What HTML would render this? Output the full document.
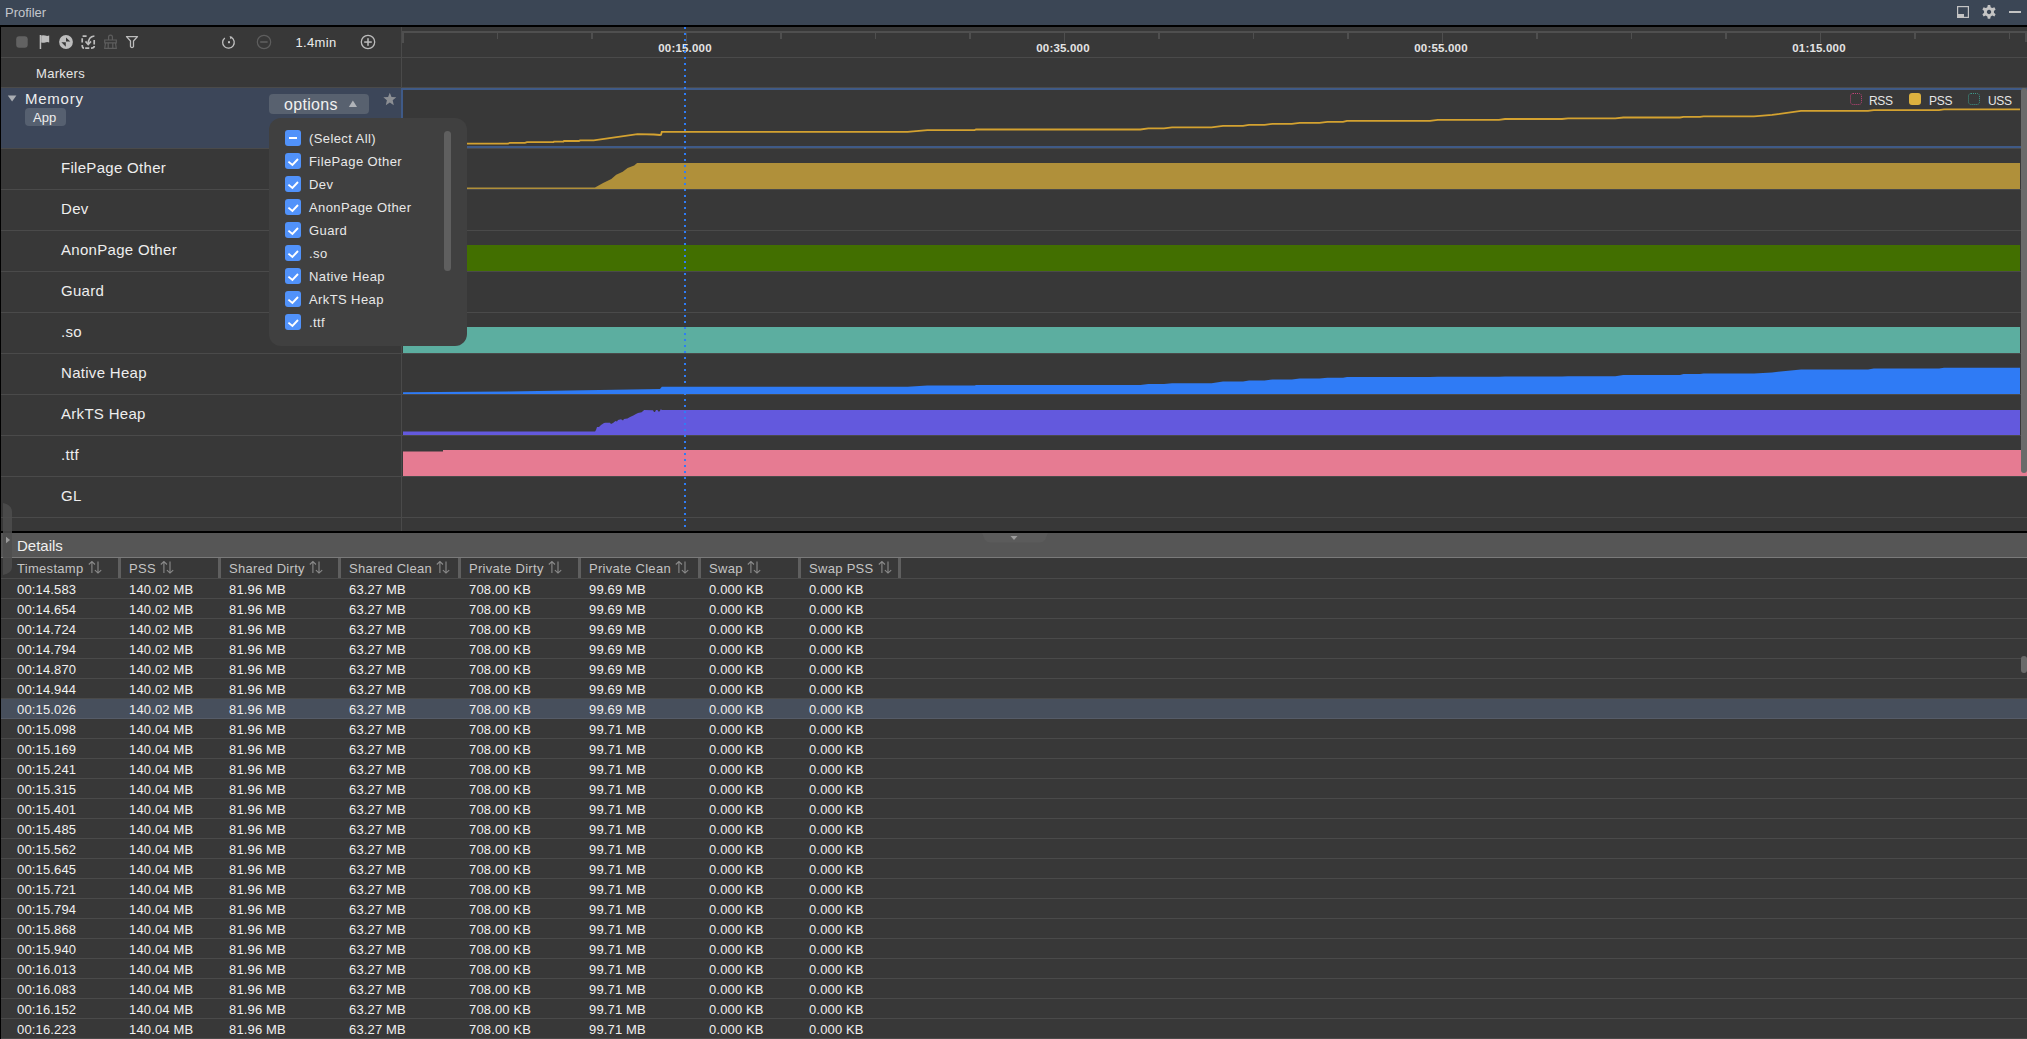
<!DOCTYPE html><html><head><meta charset="utf-8"><style>
*{box-sizing:border-box;margin:0;padding:0}
html,body{width:2027px;height:1039px;overflow:hidden;background:#383838;font-family:"Liberation Sans", sans-serif;}
.a{position:absolute}
.t{position:absolute;white-space:nowrap;line-height:1}
</style></head><body><div class="a" style="left:0px;top:0px;width:2027px;height:25px;background:#3b4655;"></div>
<div class="t" style="left:5px;top:6px;font-size:13px;color:#c3c7cc;">Profiler</div>
<svg class="a" style="left:1950px;top:0px" width="77" height="25" viewBox="1950 0 77 25">
<rect x="1957.6" y="6.6" width="10.8" height="10.8" fill="none" stroke="#c4c4c4" stroke-width="1.2"/>
<rect x="1957.5" y="14" width="6.5" height="3.5" fill="#c4c4c4"/>
<g transform="translate(1989,12)" fill="#c4c4c4">
<path d="M-1.2,-7 h2.4 l0.5,2.2 a5,5 0 0 1 1.6,0.9 l2.1,-0.8 l1.2,2.1 l-1.7,1.5 a5,5 0 0 1 0,1.9 l1.7,1.5 l-1.2,2.1 l-2.1,-0.8 a5,5 0 0 1 -1.6,0.9 l-0.5,2.2 h-2.4 l-0.5,-2.2 a5,5 0 0 1 -1.6,-0.9 l-2.1,0.8 l-1.2,-2.1 l1.7,-1.5 a5,5 0 0 1 0,-1.9 l-1.7,-1.5 l1.2,-2.1 l2.1,0.8 a5,5 0 0 1 1.6,-0.9 z M0,-2.2 a2.2,2.2 0 1 0 0.01,0 z" fill-rule="evenodd"/>
</g>
<rect x="2009" y="11" width="12" height="2" fill="#c4c4c4"/>
</svg>
<div class="a" style="left:0px;top:25px;width:2027px;height:2px;background:#000;"></div>
<div class="a" style="left:0px;top:25px;width:1px;height:1014px;background:#000;"></div>
<div class="a" style="left:1px;top:27px;width:2026px;height:504px;background:#383838;"></div>
<div class="a" style="left:1px;top:57px;width:2026px;height:1px;background:#4a4a4a;"></div>
<div class="a" style="left:1px;top:87px;width:2026px;height:1px;background:#4a4a4a;"></div>
<div class="a" style="left:1px;top:88px;width:400px;height:60px;background:#3c4659;"></div>
<div class="a" style="left:1px;top:148px;width:2026px;height:1px;background:#4a4a4a;"></div>
<div class="a" style="left:1px;top:189px;width:2026px;height:1px;background:#4a4a4a;"></div>
<div class="a" style="left:1px;top:230px;width:2026px;height:1px;background:#4a4a4a;"></div>
<div class="a" style="left:1px;top:271px;width:2026px;height:1px;background:#4a4a4a;"></div>
<div class="a" style="left:1px;top:312px;width:2026px;height:1px;background:#4a4a4a;"></div>
<div class="a" style="left:1px;top:353px;width:2026px;height:1px;background:#4a4a4a;"></div>
<div class="a" style="left:1px;top:394px;width:2026px;height:1px;background:#4a4a4a;"></div>
<div class="a" style="left:1px;top:435px;width:2026px;height:1px;background:#4a4a4a;"></div>
<div class="a" style="left:1px;top:476px;width:2026px;height:1px;background:#4a4a4a;"></div>
<div class="a" style="left:1px;top:517px;width:2026px;height:1px;background:#4a4a4a;"></div>
<div class="a" style="left:401px;top:27px;width:1px;height:504px;background:#4a4a4a;"></div>
<svg class="a" style="left:0;top:27px" width="400" height="30" viewBox="0 27 400 30">
<rect x="16.2" y="36.2" width="11.5" height="11.5" rx="3" fill="#626262"/>
<rect x="39.7" y="35" width="1.5" height="14" fill="#bdbdbd"/>
<path d="M41.2,35.6 q2,-0.8 4,0 t4,0 v6.8 q-2,-0.8 -4,0 t-4,0 z" fill="#bdbdbd"/>
<circle cx="66" cy="42" r="6.9" fill="#bdbdbd"/>
<path d="M66,37.4 L70.3,41.6 L66,41.6 Z M61.4,42.2 L65.8,42.2 L65.8,46.8 Z" fill="#383838"/>
<path d="M82.6,36.1 H86.6 M82.2,38.2 V42.6 M82.2,45 Q82.2,48.1 84,48.2 M85.2,48.2 H89.3 M91,48.2 Q94.2,48.2 94.3,46 M94.2,40 V44.5" fill="none" stroke="#bdbdbd" stroke-width="1.7"/>
<path d="M94.4,36 Q88.2,36.6 88.2,44.2" fill="none" stroke="#bdbdbd" stroke-width="1.6"/>
<path d="M85.5,41.4 L88.2,44.5 L91,41.4" fill="none" stroke="#bdbdbd" stroke-width="1.6"/>
<path d="M108.6,40 v-3 a1.9,1.9 0 0 1 3.8,0 v3 M104.7,40 h11.6 v2.8 h-11.6 z M105.5,43 L104.7,48.3 h11.6 L115.5,43 M108.2,43.2 v4.8 M112.8,43.2 v4.8" fill="none" stroke="#5e5e5e" stroke-width="1.2"/>
<path d="M126.5,36.6 h11 l-4,4.4 v5.6 a1.6,1.6 0 0 1 -3,0 v-5.6 z" fill="none" stroke="#bdbdbd" stroke-width="1.3" stroke-linejoin="round"/>
<path d="M224.8,37.9 A5.8,5.8 0 1 0 231.2,37.3" fill="none" stroke="#c0c0c0" stroke-width="1.3"/>
<path d="M229.6,36.0 L232.6,37.0 L230.5,39.2 Z" fill="#c0c0c0"/>
<rect x="228" y="41.2" width="2" height="2" fill="#c0c0c0"/>
<circle cx="264" cy="42" r="6.7" fill="none" stroke="#5e5e5e" stroke-width="1.2"/>
<rect x="260.2" y="41.2" width="7.4" height="1.6" fill="#5e5e5e"/>
<circle cx="368" cy="42" r="6.7" fill="none" stroke="#bcbcbc" stroke-width="1.3"/>
<rect x="364.2" y="41.3" width="7.6" height="1.5" fill="#bcbcbc"/>
<rect x="367.25" y="38.2" width="1.5" height="7.6" fill="#bcbcbc"/>
</svg>
<div class="t" style="left:295.5px;top:36px;font-size:13px;color:#ececec;letter-spacing:0.35px;">1.4min</div>
<div class="t" style="left:36px;top:67px;font-size:13px;color:#e6e6e6;letter-spacing:0.3px;">Markers</div>
<svg class="a" style="left:0;top:88px" width="20" height="20" viewBox="0 88 20 20"><path d="M7.8,95.4 L16.4,95.4 L12.1,101.6 Z" fill="#a9adb3"/></svg>
<div class="t" style="left:25px;top:91px;font-size:15px;color:#eeeeee;letter-spacing:0.75px;">Memory</div>
<div class="a" style="left:25px;top:108px;width:41px;height:18px;background:#566070;border-radius:4px;"></div>
<div class="t" style="left:33px;top:111px;font-size:13px;color:#eeeeee;">App</div>
<div class="a" style="left:269px;top:94px;width:100px;height:20px;background:#58616f;border-radius:4px;"></div>
<div class="t" style="left:284px;top:97px;font-size:16px;color:#f0f0f0;letter-spacing:0.3px;">options</div>
<svg class="a" style="left:340px;top:94px" width="30" height="20" viewBox="340 94 30 20"><path d="M348.8,106.9 L357,106.9 L352.9,100.6 Z" fill="#b0b3b8"/></svg>
<svg class="a" style="left:380px;top:90px" width="20" height="18" viewBox="380 90 20 18"><path d="M389.8,92.8 L391.5,96.9 L396.3,97.3 L392.7,100.3 L393.8,105.2 L389.8,102.6 L385.8,105.2 L386.9,100.3 L383.3,97.3 L388.1,96.9 Z" fill="#8c8f94"/></svg>
<div class="t" style="left:61px;top:160px;font-size:15px;color:#eeeeee;letter-spacing:0.3px;">FilePage Other</div>
<div class="t" style="left:61px;top:201px;font-size:15px;color:#eeeeee;letter-spacing:0.3px;">Dev</div>
<div class="t" style="left:61px;top:242px;font-size:15px;color:#eeeeee;letter-spacing:0.3px;">AnonPage Other</div>
<div class="t" style="left:61px;top:283px;font-size:15px;color:#eeeeee;letter-spacing:0.3px;">Guard</div>
<div class="t" style="left:61px;top:324px;font-size:15px;color:#eeeeee;letter-spacing:0.3px;">.so</div>
<div class="t" style="left:61px;top:365px;font-size:15px;color:#eeeeee;letter-spacing:0.3px;">Native Heap</div>
<div class="t" style="left:61px;top:406px;font-size:15px;color:#eeeeee;letter-spacing:0.3px;">ArkTS Heap</div>
<div class="t" style="left:61px;top:447px;font-size:15px;color:#eeeeee;letter-spacing:0.3px;">.ttf</div>
<div class="t" style="left:61px;top:488px;font-size:15px;color:#eeeeee;letter-spacing:0.3px;">GL</div>
<div class="a" style="left:402px;top:31px;width:1625px;height:2px;background:#4f4f4f;"></div>
<div class="a" style="left:402.0px;top:32px;width:1.5px;height:11px;background:#4f4f4f"></div>
<div class="a" style="left:496.5px;top:32px;width:1.5px;height:7px;background:#4f4f4f"></div>
<div class="a" style="left:591.0px;top:32px;width:1.5px;height:7px;background:#4f4f4f"></div>
<div class="a" style="left:685.5px;top:32px;width:1.5px;height:11px;background:#4f4f4f"></div>
<div class="a" style="left:780.0px;top:32px;width:1.5px;height:7px;background:#4f4f4f"></div>
<div class="a" style="left:874.5px;top:32px;width:1.5px;height:7px;background:#4f4f4f"></div>
<div class="a" style="left:969.0px;top:32px;width:1.5px;height:7px;background:#4f4f4f"></div>
<div class="a" style="left:1063.5px;top:32px;width:1.5px;height:11px;background:#4f4f4f"></div>
<div class="a" style="left:1158.0px;top:32px;width:1.5px;height:7px;background:#4f4f4f"></div>
<div class="a" style="left:1252.5px;top:32px;width:1.5px;height:7px;background:#4f4f4f"></div>
<div class="a" style="left:1347.0px;top:32px;width:1.5px;height:7px;background:#4f4f4f"></div>
<div class="a" style="left:1441.5px;top:32px;width:1.5px;height:11px;background:#4f4f4f"></div>
<div class="a" style="left:1536.0px;top:32px;width:1.5px;height:7px;background:#4f4f4f"></div>
<div class="a" style="left:1630.5px;top:32px;width:1.5px;height:7px;background:#4f4f4f"></div>
<div class="a" style="left:1725.0px;top:32px;width:1.5px;height:7px;background:#4f4f4f"></div>
<div class="a" style="left:1819.5px;top:32px;width:1.5px;height:11px;background:#4f4f4f"></div>
<div class="a" style="left:1914.0px;top:32px;width:1.5px;height:7px;background:#4f4f4f"></div>
<div class="a" style="left:2008.5px;top:32px;width:1.5px;height:7px;background:#4f4f4f"></div>
<div class="a" style="left:2025px;top:31px;width:2px;height:11px;background:#4f4f4f;"></div>
<div class="t" style="left:645.0px;width:80px;text-align:center;top:43px;font-size:11.5px;font-weight:bold;color:#e4e4e4;letter-spacing:0.2px">00:15.000</div>
<div class="t" style="left:1023.0px;width:80px;text-align:center;top:43px;font-size:11.5px;font-weight:bold;color:#e4e4e4;letter-spacing:0.2px">00:35.000</div>
<div class="t" style="left:1401.0px;width:80px;text-align:center;top:43px;font-size:11.5px;font-weight:bold;color:#e4e4e4;letter-spacing:0.2px">00:55.000</div>
<div class="t" style="left:1779.0px;width:80px;text-align:center;top:43px;font-size:11.5px;font-weight:bold;color:#e4e4e4;letter-spacing:0.2px">01:15.000</div>
<div class="a" style="left:401px;top:88px;width:1626px;height:2px;background:#3f5a87;"></div>
<div class="a" style="left:401px;top:88px;width:2px;height:60px;background:#3f5a87;"></div>
<div class="a" style="left:403px;top:146px;width:1624px;height:2px;background:#3f5a87;"></div>
<svg class="a" style="left:1840px;top:88px" width="180" height="24" viewBox="1840 88 180 24">
<rect x="1850.5" y="93.5" width="11" height="11" rx="2.5" fill="none" stroke="#c4437a" stroke-width="1" stroke-dasharray="1 1"/>
<rect x="1909" y="93" width="12" height="12" rx="3" fill="#dcb13f"/>
<rect x="1968.5" y="93.5" width="11" height="11" rx="2.5" fill="none" stroke="#3e9c8c" stroke-width="1" stroke-dasharray="1 1"/>
</svg>
<div class="t" style="left:1869px;top:95px;font-size:12px;color:#e6e6e6;letter-spacing:-0.3px;">RSS</div>
<div class="t" style="left:1929px;top:95px;font-size:12px;color:#e6e6e6;letter-spacing:-0.3px;">PSS</div>
<div class="t" style="left:1988px;top:95px;font-size:12px;color:#e6e6e6;letter-spacing:-0.3px;">USS</div>
<svg class="a" style="left:0;top:0" width="2027" height="1039" viewBox="0 0 2027 1039"><polyline points="403.0,143.7 508.0,143.7 509.7,142.8 525.0,142.8 527.0,142.2 553.5,142.2 554.0,141.6 563.5,141.6 564.0,141.0 579.0,141.0 580.0,140.4 593.7,140.4 637.5,134.2 654.0,134.5 660.0,135.0 661.0,134.8 661.8,131.9 907.6,131.9 927.4,130.1 974.7,130.1 976.0,129.5 1140.4,129.5 1148.3,128.3 1164.0,128.3 1172.0,127.4 1211.5,127.4 1223.0,125.8 1243.0,125.8 1249.0,124.8 1264.6,124.8 1272.5,123.9 1291.8,123.9 1299.7,122.8 1319.5,122.8 1327.4,121.8 1343.0,121.8 1347.0,120.8 1430.0,120.8 1437.8,119.8 1499.0,119.8 1505.0,119.0 1562.0,119.0 1568.0,118.4 1615.3,118.4 1623.3,117.5 1680.0,117.5 1683.5,116.8 1700.0,116.8 1703.5,116.3 1754.0,116.3 1772.0,114.9 1801.0,110.9 1868.0,110.9 1873.8,110.1 1939.0,110.1 1944.0,109.4 2020.0,109.4" fill="none" stroke="#d4a230" stroke-width="1.8"/><polygon points="403.0,187.6 595.0,187.6 603.1,182.9 611.3,178.9 616.2,174.7 622.7,171.7 627.6,168.1 634.2,165.5 637.1,162.9 2020.0,162.9 2020.0,189.0 403.0,189.0" fill="#b0903a"/><rect x="403" y="245" width="1617" height="26" fill="#426f00"/><rect x="403" y="327" width="1617" height="26" fill="#5caea0"/><polygon points="403.0,392.2 508.0,391.4 660.0,388.9 661.8,386.8 907.6,386.8 927.4,385.4 974.7,385.4 976.0,385.0 1140.4,385.0 1148.3,384.0 1164.0,384.0 1172.0,383.2 1211.5,383.2 1223.0,381.5 1243.0,381.5 1249.0,380.5 1264.6,380.5 1272.5,379.5 1291.8,379.5 1299.7,378.4 1319.5,378.4 1327.4,377.8 1343.0,377.8 1347.0,377.1 1430.0,377.1 1437.8,376.8 1499.0,376.8 1505.0,376.5 1562.0,376.5 1568.0,376.3 1615.3,376.3 1623.3,375.0 1680.0,375.0 1683.5,374.1 1700.0,374.1 1703.5,373.5 1754.0,373.5 1772.0,372.4 1801.0,369.4 1868.0,369.4 1873.8,368.5 1939.0,368.5 1944.0,367.8 2020.0,367.8 2020.0,394.0 403.0,394.0" fill="#2f7bf5"/><polygon points="403.0,431.4 595.0,431.4 596.0,429.9 597.0,427.0 599.0,427.0 601.0,425.0 604.0,423.0 605.5,422.8 610.0,422.8 611.0,424.0 613.0,423.0 615.5,421.0 617.0,421.5 618.0,420.0 621.0,419.3 623.0,420.5 624.0,419.0 627.4,418.4 630.0,417.0 633.3,415.4 636.0,414.0 638.0,413.0 641.6,412.2 644.2,410.1 653.0,410.2 654.0,412.0 655.0,412.0 656.0,410.0 657.5,410.0 658.3,411.5 659.5,411.5 660.8,409.2 662.0,410.1 2020.0,410.1 2020.0,435.0 403.0,435.0" fill="#6359dd"/><polygon points="403.0,451.5 443.0,451.5 443.0,450.0 2027.0,450.0 2027.0,476.0 403.0,476.0" fill="#e67b92"/></svg>
<div class="a" style="left:2021px;top:88px;width:6px;height:385px;background:#6a6a6a;border-radius:3px;"></div>
<div class="a" style="left:684px;top:27px;width:2px;height:501px;background:repeating-linear-gradient(to bottom,transparent 0,transparent 0px,#2f7df5 0px,#2f7df5 2px,transparent 2px,transparent 6px);background-position:0 0px"></div>
<div class="a" style="left:269px;top:118px;width:198px;height:228px;background:#404040;border-radius:12px;"></div>
<div class="a" style="left:444px;top:131px;width:7px;height:140px;background:#5f5f5f;border-radius:3.5px;"></div>
<div class="a" style="left:285px;top:130px;width:16px;height:16px;background:#5192fa;border-radius:3px;"></div>
<div class="a" style="left:289px;top:137px;width:8px;height:2px;background:#ffffff;"></div>
<div class="t" style="left:309px;top:132px;font-size:13px;color:#e8e8e8;letter-spacing:0.4px;">(Select All)</div>
<div class="a" style="left:285px;top:153px;width:16px;height:16px;background:#5192fa;border-radius:3px;"></div>
<svg class="a" style="left:285px;top:153px" width="16" height="16" viewBox="0 0 16 16"><path d="M3.4,8.6 L7.4,12 L13,6" fill="none" stroke="#fff" stroke-width="1.9"/></svg>
<div class="t" style="left:309px;top:155px;font-size:13px;color:#e8e8e8;letter-spacing:0.4px;">FilePage Other</div>
<div class="a" style="left:285px;top:176px;width:16px;height:16px;background:#5192fa;border-radius:3px;"></div>
<svg class="a" style="left:285px;top:176px" width="16" height="16" viewBox="0 0 16 16"><path d="M3.4,8.6 L7.4,12 L13,6" fill="none" stroke="#fff" stroke-width="1.9"/></svg>
<div class="t" style="left:309px;top:178px;font-size:13px;color:#e8e8e8;letter-spacing:0.4px;">Dev</div>
<div class="a" style="left:285px;top:199px;width:16px;height:16px;background:#5192fa;border-radius:3px;"></div>
<svg class="a" style="left:285px;top:199px" width="16" height="16" viewBox="0 0 16 16"><path d="M3.4,8.6 L7.4,12 L13,6" fill="none" stroke="#fff" stroke-width="1.9"/></svg>
<div class="t" style="left:309px;top:201px;font-size:13px;color:#e8e8e8;letter-spacing:0.4px;">AnonPage Other</div>
<div class="a" style="left:285px;top:222px;width:16px;height:16px;background:#5192fa;border-radius:3px;"></div>
<svg class="a" style="left:285px;top:222px" width="16" height="16" viewBox="0 0 16 16"><path d="M3.4,8.6 L7.4,12 L13,6" fill="none" stroke="#fff" stroke-width="1.9"/></svg>
<div class="t" style="left:309px;top:224px;font-size:13px;color:#e8e8e8;letter-spacing:0.4px;">Guard</div>
<div class="a" style="left:285px;top:245px;width:16px;height:16px;background:#5192fa;border-radius:3px;"></div>
<svg class="a" style="left:285px;top:245px" width="16" height="16" viewBox="0 0 16 16"><path d="M3.4,8.6 L7.4,12 L13,6" fill="none" stroke="#fff" stroke-width="1.9"/></svg>
<div class="t" style="left:309px;top:247px;font-size:13px;color:#e8e8e8;letter-spacing:0.4px;">.so</div>
<div class="a" style="left:285px;top:268px;width:16px;height:16px;background:#5192fa;border-radius:3px;"></div>
<svg class="a" style="left:285px;top:268px" width="16" height="16" viewBox="0 0 16 16"><path d="M3.4,8.6 L7.4,12 L13,6" fill="none" stroke="#fff" stroke-width="1.9"/></svg>
<div class="t" style="left:309px;top:270px;font-size:13px;color:#e8e8e8;letter-spacing:0.4px;">Native Heap</div>
<div class="a" style="left:285px;top:291px;width:16px;height:16px;background:#5192fa;border-radius:3px;"></div>
<svg class="a" style="left:285px;top:291px" width="16" height="16" viewBox="0 0 16 16"><path d="M3.4,8.6 L7.4,12 L13,6" fill="none" stroke="#fff" stroke-width="1.9"/></svg>
<div class="t" style="left:309px;top:293px;font-size:13px;color:#e8e8e8;letter-spacing:0.4px;">ArkTS Heap</div>
<div class="a" style="left:285px;top:314px;width:16px;height:16px;background:#5192fa;border-radius:3px;"></div>
<svg class="a" style="left:285px;top:314px" width="16" height="16" viewBox="0 0 16 16"><path d="M3.4,8.6 L7.4,12 L13,6" fill="none" stroke="#fff" stroke-width="1.9"/></svg>
<div class="t" style="left:309px;top:316px;font-size:13px;color:#e8e8e8;letter-spacing:0.4px;">.ttf</div>
<div class="a" style="left:0px;top:531px;width:2027px;height:2px;background:#000;"></div>
<div class="a" style="left:1px;top:533px;width:2026px;height:24px;background:#565656;"></div>
<div class="a" style="left:1px;top:557px;width:2026px;height:1px;background:#7a7a7a;"></div>
<svg class="a" style="left:0;top:533px" width="14" height="14" viewBox="0 533 14 14"><path d="M6,536.8 L10,540 L6,543.3 Z" fill="#9a9a9a"/></svg>
<div class="t" style="left:17px;top:538px;font-size:15px;color:#f0f0f0;">Details</div>
<svg class="a" style="left:975px;top:533px" width="80" height="12" viewBox="975 533 80 12"><path d="M982,533 L1048,533 L1045,540 Q1043,542.6 1039,542.6 L991,542.6 Q987,542.6 985,540 Z" fill="#5b5b5b"/><path d="M1010.5,536 L1017.5,536 L1014,540 Z" fill="#9c9c9c"/></svg>
<div class="a" style="left:1px;top:558px;width:2026px;height:20px;background:#383838;"></div>
<div class="a" style="left:1px;top:578px;width:2026px;height:1px;background:#4a4a4a;"></div>
<div class="a" style="left:118px;top:558px;width:3px;height:20px;background:#5f5f5f;"></div>
<div class="t" style="left:17px;top:562px;font-size:13px;color:#c4c4c4;letter-spacing:0.3px;display:flex;align-items:flex-start">Timestamp<svg style="margin-left:4px;margin-top:-1px" width="15" height="14" viewBox="0 0 15 14"><path d="M3.9,0.5 V12 M0.8,3.5 L3.9,0.5 L7,3.5 M10,0.5 V12 M6.9,9.1 L10,12.1 L13.2,9.1" fill="none" stroke="#8a8a8a" stroke-width="1.1"/></svg></div>
<div class="a" style="left:218px;top:558px;width:3px;height:20px;background:#5f5f5f;"></div>
<div class="t" style="left:129px;top:562px;font-size:13px;color:#c4c4c4;letter-spacing:0.3px;display:flex;align-items:flex-start">PSS<svg style="margin-left:4px;margin-top:-1px" width="15" height="14" viewBox="0 0 15 14"><path d="M3.9,0.5 V12 M0.8,3.5 L3.9,0.5 L7,3.5 M10,0.5 V12 M6.9,9.1 L10,12.1 L13.2,9.1" fill="none" stroke="#8a8a8a" stroke-width="1.1"/></svg></div>
<div class="a" style="left:338px;top:558px;width:3px;height:20px;background:#5f5f5f;"></div>
<div class="t" style="left:229px;top:562px;font-size:13px;color:#c4c4c4;letter-spacing:0.3px;display:flex;align-items:flex-start">Shared Dirty<svg style="margin-left:4px;margin-top:-1px" width="15" height="14" viewBox="0 0 15 14"><path d="M3.9,0.5 V12 M0.8,3.5 L3.9,0.5 L7,3.5 M10,0.5 V12 M6.9,9.1 L10,12.1 L13.2,9.1" fill="none" stroke="#8a8a8a" stroke-width="1.1"/></svg></div>
<div class="a" style="left:458px;top:558px;width:3px;height:20px;background:#5f5f5f;"></div>
<div class="t" style="left:349px;top:562px;font-size:13px;color:#c4c4c4;letter-spacing:0.3px;display:flex;align-items:flex-start">Shared Clean<svg style="margin-left:4px;margin-top:-1px" width="15" height="14" viewBox="0 0 15 14"><path d="M3.9,0.5 V12 M0.8,3.5 L3.9,0.5 L7,3.5 M10,0.5 V12 M6.9,9.1 L10,12.1 L13.2,9.1" fill="none" stroke="#8a8a8a" stroke-width="1.1"/></svg></div>
<div class="a" style="left:578px;top:558px;width:3px;height:20px;background:#5f5f5f;"></div>
<div class="t" style="left:469px;top:562px;font-size:13px;color:#c4c4c4;letter-spacing:0.3px;display:flex;align-items:flex-start">Private Dirty<svg style="margin-left:4px;margin-top:-1px" width="15" height="14" viewBox="0 0 15 14"><path d="M3.9,0.5 V12 M0.8,3.5 L3.9,0.5 L7,3.5 M10,0.5 V12 M6.9,9.1 L10,12.1 L13.2,9.1" fill="none" stroke="#8a8a8a" stroke-width="1.1"/></svg></div>
<div class="a" style="left:698px;top:558px;width:3px;height:20px;background:#5f5f5f;"></div>
<div class="t" style="left:589px;top:562px;font-size:13px;color:#c4c4c4;letter-spacing:0.3px;display:flex;align-items:flex-start">Private Clean<svg style="margin-left:4px;margin-top:-1px" width="15" height="14" viewBox="0 0 15 14"><path d="M3.9,0.5 V12 M0.8,3.5 L3.9,0.5 L7,3.5 M10,0.5 V12 M6.9,9.1 L10,12.1 L13.2,9.1" fill="none" stroke="#8a8a8a" stroke-width="1.1"/></svg></div>
<div class="a" style="left:798px;top:558px;width:3px;height:20px;background:#5f5f5f;"></div>
<div class="t" style="left:709px;top:562px;font-size:13px;color:#c4c4c4;letter-spacing:0.3px;display:flex;align-items:flex-start">Swap<svg style="margin-left:4px;margin-top:-1px" width="15" height="14" viewBox="0 0 15 14"><path d="M3.9,0.5 V12 M0.8,3.5 L3.9,0.5 L7,3.5 M10,0.5 V12 M6.9,9.1 L10,12.1 L13.2,9.1" fill="none" stroke="#8a8a8a" stroke-width="1.1"/></svg></div>
<div class="a" style="left:898px;top:558px;width:3px;height:20px;background:#5f5f5f;"></div>
<div class="t" style="left:809px;top:562px;font-size:13px;color:#c4c4c4;letter-spacing:0.3px;display:flex;align-items:flex-start">Swap PSS<svg style="margin-left:4px;margin-top:-1px" width="15" height="14" viewBox="0 0 15 14"><path d="M3.9,0.5 V12 M0.8,3.5 L3.9,0.5 L7,3.5 M10,0.5 V12 M6.9,9.1 L10,12.1 L13.2,9.1" fill="none" stroke="#8a8a8a" stroke-width="1.1"/></svg></div>
<div class="a" style="left:1px;top:598px;width:2026px;height:1px;background:#4a4a4a;"></div>
<div class="t" style="left:17px;top:583px;font-size:13px;color:#f0f0f0;letter-spacing:0.15px;">00:14.583</div>
<div class="t" style="left:129px;top:583px;font-size:13px;color:#f0f0f0;letter-spacing:0.15px;">140.02 MB</div>
<div class="t" style="left:229px;top:583px;font-size:13px;color:#f0f0f0;letter-spacing:0.15px;">81.96 MB</div>
<div class="t" style="left:349px;top:583px;font-size:13px;color:#f0f0f0;letter-spacing:0.15px;">63.27 MB</div>
<div class="t" style="left:469px;top:583px;font-size:13px;color:#f0f0f0;letter-spacing:0.15px;">708.00 KB</div>
<div class="t" style="left:589px;top:583px;font-size:13px;color:#f0f0f0;letter-spacing:0.15px;">99.69 MB</div>
<div class="t" style="left:709px;top:583px;font-size:13px;color:#f0f0f0;letter-spacing:0.15px;">0.000 KB</div>
<div class="t" style="left:809px;top:583px;font-size:13px;color:#f0f0f0;letter-spacing:0.15px;">0.000 KB</div>
<div class="a" style="left:1px;top:618px;width:2026px;height:1px;background:#4a4a4a;"></div>
<div class="t" style="left:17px;top:603px;font-size:13px;color:#f0f0f0;letter-spacing:0.15px;">00:14.654</div>
<div class="t" style="left:129px;top:603px;font-size:13px;color:#f0f0f0;letter-spacing:0.15px;">140.02 MB</div>
<div class="t" style="left:229px;top:603px;font-size:13px;color:#f0f0f0;letter-spacing:0.15px;">81.96 MB</div>
<div class="t" style="left:349px;top:603px;font-size:13px;color:#f0f0f0;letter-spacing:0.15px;">63.27 MB</div>
<div class="t" style="left:469px;top:603px;font-size:13px;color:#f0f0f0;letter-spacing:0.15px;">708.00 KB</div>
<div class="t" style="left:589px;top:603px;font-size:13px;color:#f0f0f0;letter-spacing:0.15px;">99.69 MB</div>
<div class="t" style="left:709px;top:603px;font-size:13px;color:#f0f0f0;letter-spacing:0.15px;">0.000 KB</div>
<div class="t" style="left:809px;top:603px;font-size:13px;color:#f0f0f0;letter-spacing:0.15px;">0.000 KB</div>
<div class="a" style="left:1px;top:638px;width:2026px;height:1px;background:#4a4a4a;"></div>
<div class="t" style="left:17px;top:623px;font-size:13px;color:#f0f0f0;letter-spacing:0.15px;">00:14.724</div>
<div class="t" style="left:129px;top:623px;font-size:13px;color:#f0f0f0;letter-spacing:0.15px;">140.02 MB</div>
<div class="t" style="left:229px;top:623px;font-size:13px;color:#f0f0f0;letter-spacing:0.15px;">81.96 MB</div>
<div class="t" style="left:349px;top:623px;font-size:13px;color:#f0f0f0;letter-spacing:0.15px;">63.27 MB</div>
<div class="t" style="left:469px;top:623px;font-size:13px;color:#f0f0f0;letter-spacing:0.15px;">708.00 KB</div>
<div class="t" style="left:589px;top:623px;font-size:13px;color:#f0f0f0;letter-spacing:0.15px;">99.69 MB</div>
<div class="t" style="left:709px;top:623px;font-size:13px;color:#f0f0f0;letter-spacing:0.15px;">0.000 KB</div>
<div class="t" style="left:809px;top:623px;font-size:13px;color:#f0f0f0;letter-spacing:0.15px;">0.000 KB</div>
<div class="a" style="left:1px;top:658px;width:2026px;height:1px;background:#4a4a4a;"></div>
<div class="t" style="left:17px;top:643px;font-size:13px;color:#f0f0f0;letter-spacing:0.15px;">00:14.794</div>
<div class="t" style="left:129px;top:643px;font-size:13px;color:#f0f0f0;letter-spacing:0.15px;">140.02 MB</div>
<div class="t" style="left:229px;top:643px;font-size:13px;color:#f0f0f0;letter-spacing:0.15px;">81.96 MB</div>
<div class="t" style="left:349px;top:643px;font-size:13px;color:#f0f0f0;letter-spacing:0.15px;">63.27 MB</div>
<div class="t" style="left:469px;top:643px;font-size:13px;color:#f0f0f0;letter-spacing:0.15px;">708.00 KB</div>
<div class="t" style="left:589px;top:643px;font-size:13px;color:#f0f0f0;letter-spacing:0.15px;">99.69 MB</div>
<div class="t" style="left:709px;top:643px;font-size:13px;color:#f0f0f0;letter-spacing:0.15px;">0.000 KB</div>
<div class="t" style="left:809px;top:643px;font-size:13px;color:#f0f0f0;letter-spacing:0.15px;">0.000 KB</div>
<div class="a" style="left:1px;top:678px;width:2026px;height:1px;background:#4a4a4a;"></div>
<div class="t" style="left:17px;top:663px;font-size:13px;color:#f0f0f0;letter-spacing:0.15px;">00:14.870</div>
<div class="t" style="left:129px;top:663px;font-size:13px;color:#f0f0f0;letter-spacing:0.15px;">140.02 MB</div>
<div class="t" style="left:229px;top:663px;font-size:13px;color:#f0f0f0;letter-spacing:0.15px;">81.96 MB</div>
<div class="t" style="left:349px;top:663px;font-size:13px;color:#f0f0f0;letter-spacing:0.15px;">63.27 MB</div>
<div class="t" style="left:469px;top:663px;font-size:13px;color:#f0f0f0;letter-spacing:0.15px;">708.00 KB</div>
<div class="t" style="left:589px;top:663px;font-size:13px;color:#f0f0f0;letter-spacing:0.15px;">99.69 MB</div>
<div class="t" style="left:709px;top:663px;font-size:13px;color:#f0f0f0;letter-spacing:0.15px;">0.000 KB</div>
<div class="t" style="left:809px;top:663px;font-size:13px;color:#f0f0f0;letter-spacing:0.15px;">0.000 KB</div>
<div class="a" style="left:1px;top:698px;width:2026px;height:1px;background:#4a4a4a;"></div>
<div class="t" style="left:17px;top:683px;font-size:13px;color:#f0f0f0;letter-spacing:0.15px;">00:14.944</div>
<div class="t" style="left:129px;top:683px;font-size:13px;color:#f0f0f0;letter-spacing:0.15px;">140.02 MB</div>
<div class="t" style="left:229px;top:683px;font-size:13px;color:#f0f0f0;letter-spacing:0.15px;">81.96 MB</div>
<div class="t" style="left:349px;top:683px;font-size:13px;color:#f0f0f0;letter-spacing:0.15px;">63.27 MB</div>
<div class="t" style="left:469px;top:683px;font-size:13px;color:#f0f0f0;letter-spacing:0.15px;">708.00 KB</div>
<div class="t" style="left:589px;top:683px;font-size:13px;color:#f0f0f0;letter-spacing:0.15px;">99.69 MB</div>
<div class="t" style="left:709px;top:683px;font-size:13px;color:#f0f0f0;letter-spacing:0.15px;">0.000 KB</div>
<div class="t" style="left:809px;top:683px;font-size:13px;color:#f0f0f0;letter-spacing:0.15px;">0.000 KB</div>
<div class="a" style="left:1px;top:699px;width:2026px;height:19px;background:#474f5c;"></div>
<div class="a" style="left:1px;top:718px;width:2026px;height:1px;background:#565c68;"></div>
<div class="t" style="left:17px;top:703px;font-size:13px;color:#f0f0f0;letter-spacing:0.15px;">00:15.026</div>
<div class="t" style="left:129px;top:703px;font-size:13px;color:#f0f0f0;letter-spacing:0.15px;">140.02 MB</div>
<div class="t" style="left:229px;top:703px;font-size:13px;color:#f0f0f0;letter-spacing:0.15px;">81.96 MB</div>
<div class="t" style="left:349px;top:703px;font-size:13px;color:#f0f0f0;letter-spacing:0.15px;">63.27 MB</div>
<div class="t" style="left:469px;top:703px;font-size:13px;color:#f0f0f0;letter-spacing:0.15px;">708.00 KB</div>
<div class="t" style="left:589px;top:703px;font-size:13px;color:#f0f0f0;letter-spacing:0.15px;">99.69 MB</div>
<div class="t" style="left:709px;top:703px;font-size:13px;color:#f0f0f0;letter-spacing:0.15px;">0.000 KB</div>
<div class="t" style="left:809px;top:703px;font-size:13px;color:#f0f0f0;letter-spacing:0.15px;">0.000 KB</div>
<div class="a" style="left:1px;top:738px;width:2026px;height:1px;background:#4a4a4a;"></div>
<div class="t" style="left:17px;top:723px;font-size:13px;color:#f0f0f0;letter-spacing:0.15px;">00:15.098</div>
<div class="t" style="left:129px;top:723px;font-size:13px;color:#f0f0f0;letter-spacing:0.15px;">140.04 MB</div>
<div class="t" style="left:229px;top:723px;font-size:13px;color:#f0f0f0;letter-spacing:0.15px;">81.96 MB</div>
<div class="t" style="left:349px;top:723px;font-size:13px;color:#f0f0f0;letter-spacing:0.15px;">63.27 MB</div>
<div class="t" style="left:469px;top:723px;font-size:13px;color:#f0f0f0;letter-spacing:0.15px;">708.00 KB</div>
<div class="t" style="left:589px;top:723px;font-size:13px;color:#f0f0f0;letter-spacing:0.15px;">99.71 MB</div>
<div class="t" style="left:709px;top:723px;font-size:13px;color:#f0f0f0;letter-spacing:0.15px;">0.000 KB</div>
<div class="t" style="left:809px;top:723px;font-size:13px;color:#f0f0f0;letter-spacing:0.15px;">0.000 KB</div>
<div class="a" style="left:1px;top:758px;width:2026px;height:1px;background:#4a4a4a;"></div>
<div class="t" style="left:17px;top:743px;font-size:13px;color:#f0f0f0;letter-spacing:0.15px;">00:15.169</div>
<div class="t" style="left:129px;top:743px;font-size:13px;color:#f0f0f0;letter-spacing:0.15px;">140.04 MB</div>
<div class="t" style="left:229px;top:743px;font-size:13px;color:#f0f0f0;letter-spacing:0.15px;">81.96 MB</div>
<div class="t" style="left:349px;top:743px;font-size:13px;color:#f0f0f0;letter-spacing:0.15px;">63.27 MB</div>
<div class="t" style="left:469px;top:743px;font-size:13px;color:#f0f0f0;letter-spacing:0.15px;">708.00 KB</div>
<div class="t" style="left:589px;top:743px;font-size:13px;color:#f0f0f0;letter-spacing:0.15px;">99.71 MB</div>
<div class="t" style="left:709px;top:743px;font-size:13px;color:#f0f0f0;letter-spacing:0.15px;">0.000 KB</div>
<div class="t" style="left:809px;top:743px;font-size:13px;color:#f0f0f0;letter-spacing:0.15px;">0.000 KB</div>
<div class="a" style="left:1px;top:778px;width:2026px;height:1px;background:#4a4a4a;"></div>
<div class="t" style="left:17px;top:763px;font-size:13px;color:#f0f0f0;letter-spacing:0.15px;">00:15.241</div>
<div class="t" style="left:129px;top:763px;font-size:13px;color:#f0f0f0;letter-spacing:0.15px;">140.04 MB</div>
<div class="t" style="left:229px;top:763px;font-size:13px;color:#f0f0f0;letter-spacing:0.15px;">81.96 MB</div>
<div class="t" style="left:349px;top:763px;font-size:13px;color:#f0f0f0;letter-spacing:0.15px;">63.27 MB</div>
<div class="t" style="left:469px;top:763px;font-size:13px;color:#f0f0f0;letter-spacing:0.15px;">708.00 KB</div>
<div class="t" style="left:589px;top:763px;font-size:13px;color:#f0f0f0;letter-spacing:0.15px;">99.71 MB</div>
<div class="t" style="left:709px;top:763px;font-size:13px;color:#f0f0f0;letter-spacing:0.15px;">0.000 KB</div>
<div class="t" style="left:809px;top:763px;font-size:13px;color:#f0f0f0;letter-spacing:0.15px;">0.000 KB</div>
<div class="a" style="left:1px;top:798px;width:2026px;height:1px;background:#4a4a4a;"></div>
<div class="t" style="left:17px;top:783px;font-size:13px;color:#f0f0f0;letter-spacing:0.15px;">00:15.315</div>
<div class="t" style="left:129px;top:783px;font-size:13px;color:#f0f0f0;letter-spacing:0.15px;">140.04 MB</div>
<div class="t" style="left:229px;top:783px;font-size:13px;color:#f0f0f0;letter-spacing:0.15px;">81.96 MB</div>
<div class="t" style="left:349px;top:783px;font-size:13px;color:#f0f0f0;letter-spacing:0.15px;">63.27 MB</div>
<div class="t" style="left:469px;top:783px;font-size:13px;color:#f0f0f0;letter-spacing:0.15px;">708.00 KB</div>
<div class="t" style="left:589px;top:783px;font-size:13px;color:#f0f0f0;letter-spacing:0.15px;">99.71 MB</div>
<div class="t" style="left:709px;top:783px;font-size:13px;color:#f0f0f0;letter-spacing:0.15px;">0.000 KB</div>
<div class="t" style="left:809px;top:783px;font-size:13px;color:#f0f0f0;letter-spacing:0.15px;">0.000 KB</div>
<div class="a" style="left:1px;top:818px;width:2026px;height:1px;background:#4a4a4a;"></div>
<div class="t" style="left:17px;top:803px;font-size:13px;color:#f0f0f0;letter-spacing:0.15px;">00:15.401</div>
<div class="t" style="left:129px;top:803px;font-size:13px;color:#f0f0f0;letter-spacing:0.15px;">140.04 MB</div>
<div class="t" style="left:229px;top:803px;font-size:13px;color:#f0f0f0;letter-spacing:0.15px;">81.96 MB</div>
<div class="t" style="left:349px;top:803px;font-size:13px;color:#f0f0f0;letter-spacing:0.15px;">63.27 MB</div>
<div class="t" style="left:469px;top:803px;font-size:13px;color:#f0f0f0;letter-spacing:0.15px;">708.00 KB</div>
<div class="t" style="left:589px;top:803px;font-size:13px;color:#f0f0f0;letter-spacing:0.15px;">99.71 MB</div>
<div class="t" style="left:709px;top:803px;font-size:13px;color:#f0f0f0;letter-spacing:0.15px;">0.000 KB</div>
<div class="t" style="left:809px;top:803px;font-size:13px;color:#f0f0f0;letter-spacing:0.15px;">0.000 KB</div>
<div class="a" style="left:1px;top:838px;width:2026px;height:1px;background:#4a4a4a;"></div>
<div class="t" style="left:17px;top:823px;font-size:13px;color:#f0f0f0;letter-spacing:0.15px;">00:15.485</div>
<div class="t" style="left:129px;top:823px;font-size:13px;color:#f0f0f0;letter-spacing:0.15px;">140.04 MB</div>
<div class="t" style="left:229px;top:823px;font-size:13px;color:#f0f0f0;letter-spacing:0.15px;">81.96 MB</div>
<div class="t" style="left:349px;top:823px;font-size:13px;color:#f0f0f0;letter-spacing:0.15px;">63.27 MB</div>
<div class="t" style="left:469px;top:823px;font-size:13px;color:#f0f0f0;letter-spacing:0.15px;">708.00 KB</div>
<div class="t" style="left:589px;top:823px;font-size:13px;color:#f0f0f0;letter-spacing:0.15px;">99.71 MB</div>
<div class="t" style="left:709px;top:823px;font-size:13px;color:#f0f0f0;letter-spacing:0.15px;">0.000 KB</div>
<div class="t" style="left:809px;top:823px;font-size:13px;color:#f0f0f0;letter-spacing:0.15px;">0.000 KB</div>
<div class="a" style="left:1px;top:858px;width:2026px;height:1px;background:#4a4a4a;"></div>
<div class="t" style="left:17px;top:843px;font-size:13px;color:#f0f0f0;letter-spacing:0.15px;">00:15.562</div>
<div class="t" style="left:129px;top:843px;font-size:13px;color:#f0f0f0;letter-spacing:0.15px;">140.04 MB</div>
<div class="t" style="left:229px;top:843px;font-size:13px;color:#f0f0f0;letter-spacing:0.15px;">81.96 MB</div>
<div class="t" style="left:349px;top:843px;font-size:13px;color:#f0f0f0;letter-spacing:0.15px;">63.27 MB</div>
<div class="t" style="left:469px;top:843px;font-size:13px;color:#f0f0f0;letter-spacing:0.15px;">708.00 KB</div>
<div class="t" style="left:589px;top:843px;font-size:13px;color:#f0f0f0;letter-spacing:0.15px;">99.71 MB</div>
<div class="t" style="left:709px;top:843px;font-size:13px;color:#f0f0f0;letter-spacing:0.15px;">0.000 KB</div>
<div class="t" style="left:809px;top:843px;font-size:13px;color:#f0f0f0;letter-spacing:0.15px;">0.000 KB</div>
<div class="a" style="left:1px;top:878px;width:2026px;height:1px;background:#4a4a4a;"></div>
<div class="t" style="left:17px;top:863px;font-size:13px;color:#f0f0f0;letter-spacing:0.15px;">00:15.645</div>
<div class="t" style="left:129px;top:863px;font-size:13px;color:#f0f0f0;letter-spacing:0.15px;">140.04 MB</div>
<div class="t" style="left:229px;top:863px;font-size:13px;color:#f0f0f0;letter-spacing:0.15px;">81.96 MB</div>
<div class="t" style="left:349px;top:863px;font-size:13px;color:#f0f0f0;letter-spacing:0.15px;">63.27 MB</div>
<div class="t" style="left:469px;top:863px;font-size:13px;color:#f0f0f0;letter-spacing:0.15px;">708.00 KB</div>
<div class="t" style="left:589px;top:863px;font-size:13px;color:#f0f0f0;letter-spacing:0.15px;">99.71 MB</div>
<div class="t" style="left:709px;top:863px;font-size:13px;color:#f0f0f0;letter-spacing:0.15px;">0.000 KB</div>
<div class="t" style="left:809px;top:863px;font-size:13px;color:#f0f0f0;letter-spacing:0.15px;">0.000 KB</div>
<div class="a" style="left:1px;top:898px;width:2026px;height:1px;background:#4a4a4a;"></div>
<div class="t" style="left:17px;top:883px;font-size:13px;color:#f0f0f0;letter-spacing:0.15px;">00:15.721</div>
<div class="t" style="left:129px;top:883px;font-size:13px;color:#f0f0f0;letter-spacing:0.15px;">140.04 MB</div>
<div class="t" style="left:229px;top:883px;font-size:13px;color:#f0f0f0;letter-spacing:0.15px;">81.96 MB</div>
<div class="t" style="left:349px;top:883px;font-size:13px;color:#f0f0f0;letter-spacing:0.15px;">63.27 MB</div>
<div class="t" style="left:469px;top:883px;font-size:13px;color:#f0f0f0;letter-spacing:0.15px;">708.00 KB</div>
<div class="t" style="left:589px;top:883px;font-size:13px;color:#f0f0f0;letter-spacing:0.15px;">99.71 MB</div>
<div class="t" style="left:709px;top:883px;font-size:13px;color:#f0f0f0;letter-spacing:0.15px;">0.000 KB</div>
<div class="t" style="left:809px;top:883px;font-size:13px;color:#f0f0f0;letter-spacing:0.15px;">0.000 KB</div>
<div class="a" style="left:1px;top:918px;width:2026px;height:1px;background:#4a4a4a;"></div>
<div class="t" style="left:17px;top:903px;font-size:13px;color:#f0f0f0;letter-spacing:0.15px;">00:15.794</div>
<div class="t" style="left:129px;top:903px;font-size:13px;color:#f0f0f0;letter-spacing:0.15px;">140.04 MB</div>
<div class="t" style="left:229px;top:903px;font-size:13px;color:#f0f0f0;letter-spacing:0.15px;">81.96 MB</div>
<div class="t" style="left:349px;top:903px;font-size:13px;color:#f0f0f0;letter-spacing:0.15px;">63.27 MB</div>
<div class="t" style="left:469px;top:903px;font-size:13px;color:#f0f0f0;letter-spacing:0.15px;">708.00 KB</div>
<div class="t" style="left:589px;top:903px;font-size:13px;color:#f0f0f0;letter-spacing:0.15px;">99.71 MB</div>
<div class="t" style="left:709px;top:903px;font-size:13px;color:#f0f0f0;letter-spacing:0.15px;">0.000 KB</div>
<div class="t" style="left:809px;top:903px;font-size:13px;color:#f0f0f0;letter-spacing:0.15px;">0.000 KB</div>
<div class="a" style="left:1px;top:938px;width:2026px;height:1px;background:#4a4a4a;"></div>
<div class="t" style="left:17px;top:923px;font-size:13px;color:#f0f0f0;letter-spacing:0.15px;">00:15.868</div>
<div class="t" style="left:129px;top:923px;font-size:13px;color:#f0f0f0;letter-spacing:0.15px;">140.04 MB</div>
<div class="t" style="left:229px;top:923px;font-size:13px;color:#f0f0f0;letter-spacing:0.15px;">81.96 MB</div>
<div class="t" style="left:349px;top:923px;font-size:13px;color:#f0f0f0;letter-spacing:0.15px;">63.27 MB</div>
<div class="t" style="left:469px;top:923px;font-size:13px;color:#f0f0f0;letter-spacing:0.15px;">708.00 KB</div>
<div class="t" style="left:589px;top:923px;font-size:13px;color:#f0f0f0;letter-spacing:0.15px;">99.71 MB</div>
<div class="t" style="left:709px;top:923px;font-size:13px;color:#f0f0f0;letter-spacing:0.15px;">0.000 KB</div>
<div class="t" style="left:809px;top:923px;font-size:13px;color:#f0f0f0;letter-spacing:0.15px;">0.000 KB</div>
<div class="a" style="left:1px;top:958px;width:2026px;height:1px;background:#4a4a4a;"></div>
<div class="t" style="left:17px;top:943px;font-size:13px;color:#f0f0f0;letter-spacing:0.15px;">00:15.940</div>
<div class="t" style="left:129px;top:943px;font-size:13px;color:#f0f0f0;letter-spacing:0.15px;">140.04 MB</div>
<div class="t" style="left:229px;top:943px;font-size:13px;color:#f0f0f0;letter-spacing:0.15px;">81.96 MB</div>
<div class="t" style="left:349px;top:943px;font-size:13px;color:#f0f0f0;letter-spacing:0.15px;">63.27 MB</div>
<div class="t" style="left:469px;top:943px;font-size:13px;color:#f0f0f0;letter-spacing:0.15px;">708.00 KB</div>
<div class="t" style="left:589px;top:943px;font-size:13px;color:#f0f0f0;letter-spacing:0.15px;">99.71 MB</div>
<div class="t" style="left:709px;top:943px;font-size:13px;color:#f0f0f0;letter-spacing:0.15px;">0.000 KB</div>
<div class="t" style="left:809px;top:943px;font-size:13px;color:#f0f0f0;letter-spacing:0.15px;">0.000 KB</div>
<div class="a" style="left:1px;top:978px;width:2026px;height:1px;background:#4a4a4a;"></div>
<div class="t" style="left:17px;top:963px;font-size:13px;color:#f0f0f0;letter-spacing:0.15px;">00:16.013</div>
<div class="t" style="left:129px;top:963px;font-size:13px;color:#f0f0f0;letter-spacing:0.15px;">140.04 MB</div>
<div class="t" style="left:229px;top:963px;font-size:13px;color:#f0f0f0;letter-spacing:0.15px;">81.96 MB</div>
<div class="t" style="left:349px;top:963px;font-size:13px;color:#f0f0f0;letter-spacing:0.15px;">63.27 MB</div>
<div class="t" style="left:469px;top:963px;font-size:13px;color:#f0f0f0;letter-spacing:0.15px;">708.00 KB</div>
<div class="t" style="left:589px;top:963px;font-size:13px;color:#f0f0f0;letter-spacing:0.15px;">99.71 MB</div>
<div class="t" style="left:709px;top:963px;font-size:13px;color:#f0f0f0;letter-spacing:0.15px;">0.000 KB</div>
<div class="t" style="left:809px;top:963px;font-size:13px;color:#f0f0f0;letter-spacing:0.15px;">0.000 KB</div>
<div class="a" style="left:1px;top:998px;width:2026px;height:1px;background:#4a4a4a;"></div>
<div class="t" style="left:17px;top:983px;font-size:13px;color:#f0f0f0;letter-spacing:0.15px;">00:16.083</div>
<div class="t" style="left:129px;top:983px;font-size:13px;color:#f0f0f0;letter-spacing:0.15px;">140.04 MB</div>
<div class="t" style="left:229px;top:983px;font-size:13px;color:#f0f0f0;letter-spacing:0.15px;">81.96 MB</div>
<div class="t" style="left:349px;top:983px;font-size:13px;color:#f0f0f0;letter-spacing:0.15px;">63.27 MB</div>
<div class="t" style="left:469px;top:983px;font-size:13px;color:#f0f0f0;letter-spacing:0.15px;">708.00 KB</div>
<div class="t" style="left:589px;top:983px;font-size:13px;color:#f0f0f0;letter-spacing:0.15px;">99.71 MB</div>
<div class="t" style="left:709px;top:983px;font-size:13px;color:#f0f0f0;letter-spacing:0.15px;">0.000 KB</div>
<div class="t" style="left:809px;top:983px;font-size:13px;color:#f0f0f0;letter-spacing:0.15px;">0.000 KB</div>
<div class="a" style="left:1px;top:1018px;width:2026px;height:1px;background:#4a4a4a;"></div>
<div class="t" style="left:17px;top:1003px;font-size:13px;color:#f0f0f0;letter-spacing:0.15px;">00:16.152</div>
<div class="t" style="left:129px;top:1003px;font-size:13px;color:#f0f0f0;letter-spacing:0.15px;">140.04 MB</div>
<div class="t" style="left:229px;top:1003px;font-size:13px;color:#f0f0f0;letter-spacing:0.15px;">81.96 MB</div>
<div class="t" style="left:349px;top:1003px;font-size:13px;color:#f0f0f0;letter-spacing:0.15px;">63.27 MB</div>
<div class="t" style="left:469px;top:1003px;font-size:13px;color:#f0f0f0;letter-spacing:0.15px;">708.00 KB</div>
<div class="t" style="left:589px;top:1003px;font-size:13px;color:#f0f0f0;letter-spacing:0.15px;">99.71 MB</div>
<div class="t" style="left:709px;top:1003px;font-size:13px;color:#f0f0f0;letter-spacing:0.15px;">0.000 KB</div>
<div class="t" style="left:809px;top:1003px;font-size:13px;color:#f0f0f0;letter-spacing:0.15px;">0.000 KB</div>
<div class="a" style="left:1px;top:1038px;width:2026px;height:1px;background:#4a4a4a;"></div>
<div class="t" style="left:17px;top:1023px;font-size:13px;color:#f0f0f0;letter-spacing:0.15px;">00:16.223</div>
<div class="t" style="left:129px;top:1023px;font-size:13px;color:#f0f0f0;letter-spacing:0.15px;">140.04 MB</div>
<div class="t" style="left:229px;top:1023px;font-size:13px;color:#f0f0f0;letter-spacing:0.15px;">81.96 MB</div>
<div class="t" style="left:349px;top:1023px;font-size:13px;color:#f0f0f0;letter-spacing:0.15px;">63.27 MB</div>
<div class="t" style="left:469px;top:1023px;font-size:13px;color:#f0f0f0;letter-spacing:0.15px;">708.00 KB</div>
<div class="t" style="left:589px;top:1023px;font-size:13px;color:#f0f0f0;letter-spacing:0.15px;">99.71 MB</div>
<div class="t" style="left:709px;top:1023px;font-size:13px;color:#f0f0f0;letter-spacing:0.15px;">0.000 KB</div>
<div class="t" style="left:809px;top:1023px;font-size:13px;color:#f0f0f0;letter-spacing:0.15px;">0.000 KB</div>
<div class="a" style="left:2021px;top:656px;width:6px;height:17px;background:#6a6a6a;border-radius:3px;"></div>
<svg class="a" style="left:0;top:500px" width="14" height="80" viewBox="0 500 14 80"><path d="M3,503 Q12,505 12,512 L12,567 Q12,573 3,575 Z" fill="#4d4d4d" fill-opacity="0.85"/><path d="M6,536.8 L10,540 L6,543.3 Z" fill="#9a9a9a"/></svg></body></html>
